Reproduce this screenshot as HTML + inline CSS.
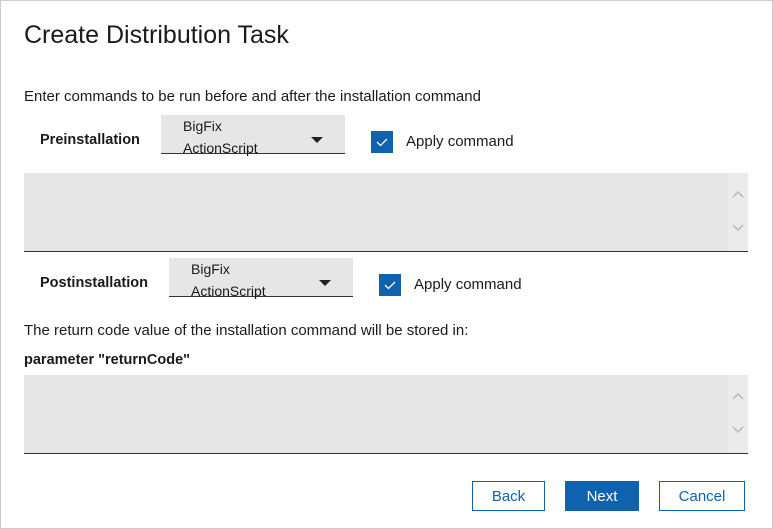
<!DOCTYPE html>
<html><head><style>
body{margin:0;width:773px;height:529px;background:#fff;font-family:"Liberation Sans",sans-serif;color:#1a1a1a;position:relative;overflow:hidden}
.a{position:absolute}
.dd{background:#e6e6e6;border-bottom:1px solid #333;width:184px;height:38px;font-size:14px;line-height:20px}
.dd span{position:absolute;left:22px;top:1px}
.dd span.b{top:23px}
.dd i{position:absolute;left:150px;top:22px;width:0;height:0;border-left:6px solid transparent;border-right:6px solid transparent;border-top:6px solid #222}
.cb{width:22px;height:22px;background:#0f62ae}
.ta{left:24px;width:724px;height:78px;background:#e6e6e6;border-bottom:1px solid #333}
.sb{position:absolute;right:0;top:0;width:20px;height:78px;background:#ebebeb}
.btn{top:481px;height:28px;border:1px solid #0f62ae;font-size:15px;line-height:30px;text-align:center;color:#0f62ae;background:#fff}
</style></head><body>
<div class="a" style="left:0;top:0;width:771px;height:527px;border:1px solid #ccc"></div>
<div class="a" style="left:24px;top:21px;font-size:25px">Create Distribution Task</div>
<div class="a" style="left:24px;top:88px;font-size:15px">Enter commands to be run before and after the installation command</div>
<div class="a" style="left:40px;top:132px;font-size:14.5px;font-weight:bold">Preinstallation</div>
<div class="a dd" style="left:161px;top:115px"><span>BigFix</span><span class="b">ActionScript</span><i></i></div>
<div class="a cb" style="left:371px;top:131px"><svg width="22" height="22"><path d="M6 11l3.5 3.5L16 8" stroke="#fff" stroke-width="1.3" fill="none"/></svg></div>
<div class="a" style="left:406px;top:133px;font-size:15px">Apply command</div>
<div class="a ta" style="top:173px"><div class="sb"><svg width="20" height="78"><path d="M5 24l5-5 5 5M5 52l5 5 5-5" stroke="#b8b8b8" stroke-width="1.5" fill="none"/></svg></div></div>
<div class="a" style="left:40px;top:275px;font-size:14.5px;font-weight:bold">Postinstallation</div>
<div class="a dd" style="left:169px;top:258px"><span>BigFix</span><span class="b">ActionScript</span><i></i></div>
<div class="a cb" style="left:379px;top:274px"><svg width="22" height="22"><path d="M6 11l3.5 3.5L16 8" stroke="#fff" stroke-width="1.3" fill="none"/></svg></div>
<div class="a" style="left:414px;top:276px;font-size:15px">Apply command</div>
<div class="a" style="left:24px;top:322px;font-size:15px">The return code value of the installation command will be stored in:</div>
<div class="a" style="left:24px;top:352px;font-size:14.5px;font-weight:bold">parameter "returnCode"</div>
<div class="a ta" style="top:375px"><div class="sb"><svg width="20" height="78"><path d="M5 24l5-5 5 5M5 52l5 5 5-5" stroke="#b8b8b8" stroke-width="1.5" fill="none"/></svg></div></div>
<div class="a btn" style="left:472px;width:71px">Back</div>
<div class="a btn" style="left:565px;width:72px;background:#0f62ae;color:#fff">Next</div>
<div class="a btn" style="left:659px;width:84px">Cancel</div>
</body></html>
